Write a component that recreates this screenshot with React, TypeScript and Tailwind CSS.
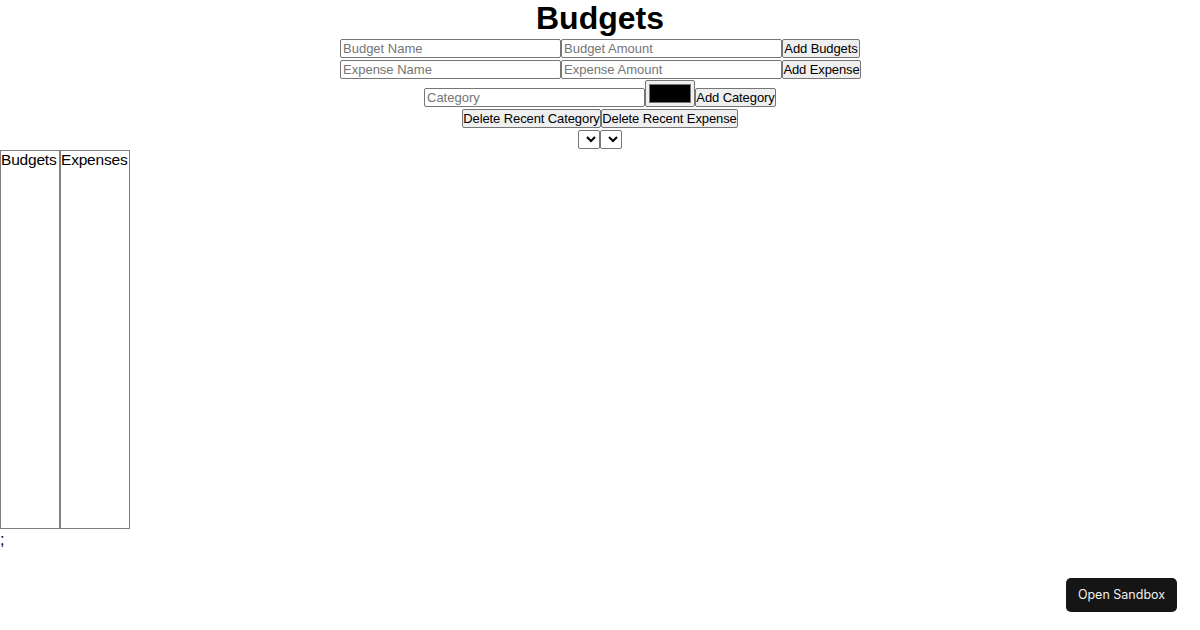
import React from 'react';

const inputCls =
  "w-[221px] h-[19px] border border-[#767676] rounded-[2px] px-[2px] text-[13px] leading-[15px] text-black placeholder:text-[#757575] bg-white outline-none";
const btnCls =
  "h-[19px] border border-[#767676] rounded-[2px] bg-[#efefef] px-0 text-[13px] tracking-[-0.1px] leading-[15px] text-black whitespace-nowrap flex items-center justify-center overflow-visible";

export default function App() {
  return (
    <div className="relative w-[1200px] h-[630px] bg-white text-black font-['Liberation_Sans',Arial,sans-serif]">
      <div className="flex flex-col items-center">
        <h1 className="text-[32px] font-bold leading-[37px] h-[39px]">Budgets</h1>
        <div className="flex h-[21px]">
          <input className={inputCls} placeholder="Budget Name" />
          <input className={inputCls} placeholder="Budget Amount" />
          <button className={`${btnCls} w-[78px]`}>Add Budgets</button>
        </div>
        <div className="flex h-[20px] pl-[1px]">
          <input className={inputCls} placeholder="Expense Name" />
          <input className={inputCls} placeholder="Expense Amount" />
          <button className={`${btnCls} w-[79px]`}>Add Expense</button>
        </div>
        <div className="flex items-start h-[29px]">
          <input className={`${inputCls} mt-[8px]`} placeholder="Category" />
          <div className="w-[50px] h-[27px] border border-[#767676] rounded-[2px] bg-[#efefef] p-[3px] flex">
            <div className="flex-1 bg-black border border-[#777]"></div>
          </div>
          <button className={`${btnCls} w-[81px] mt-[8px]`}>Add Category</button>
        </div>
        <div className="flex h-[21px]">
          <button className={`${btnCls} w-[139px]`}>Delete Recent Category</button>
          <button className={`${btnCls} w-[137px]`}>Delete Recent Expense</button>
        </div>
        <div className="flex h-[20px]">
          <select className="w-[22px] h-[19px] border border-[#767676] rounded-[2px] bg-white text-[13px]"></select>
          <select className="w-[22px] h-[19px] border border-[#767676] rounded-[2px] bg-white text-[13px]"></select>
        </div>
      </div>
      <div className="flex h-[379px]">
        <div className="w-[60px] border border-[#808080] text-[15.5px] tracking-[-0.2px] leading-[18px]">Budgets</div>
        <div className="w-[70px] border border-[#808080] text-[15.5px] tracking-[-0.2px] leading-[18px]">Expenses</div>
      </div>
      <div className="text-[16px] leading-[18px] mt-[2px]">;</div>
      <button className="absolute left-[1066px] top-[578px] w-[111px] h-[34px] rounded-[5px] bg-[#151515] text-[#f0f0f0] text-[12.5px] font-['Inter',sans-serif]">
        Open Sandbox
      </button>
    </div>
  );
}
